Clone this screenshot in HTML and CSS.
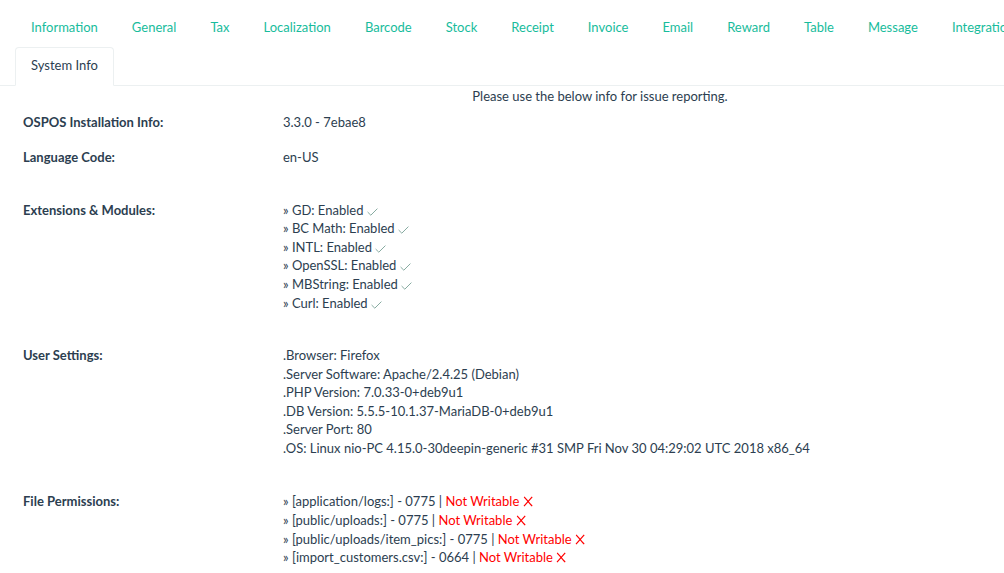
FILE: index.html
```html
<!DOCTYPE html>
<html lang="en">
<head>
<meta charset="utf-8">
<title>System Info</title>
<link rel="stylesheet" href="styles.css">
</head>
<body>
<div class="page">
  <ul class="tabs">
    <li><a>Information</a></li>
    <li><a>General</a></li>
    <li><a>Tax</a></li>
    <li><a>Localization</a></li>
    <li><a>Barcode</a></li>
    <li><a>Stock</a></li>
    <li><a>Receipt</a></li>
    <li><a>Invoice</a></li>
    <li><a>Email</a></li>
    <li><a>Reward</a></li>
    <li><a>Table</a></li>
    <li><a>Message</a></li>
    <li><a>Integrations</a></li>
    <li class="active"><a>System Info</a></li>
  </ul>
  <div class="content">
    <p class="intro">Please use the below info for issue reporting.</p>
    <div class="rows">
      <div class="row first">
        <div class="label">OSPOS Installation Info:</div>
        <div class="value">3.3.0 - 7ebae8</div>
      </div>
      <div class="row">
        <div class="label">Language Code:</div>
        <div class="value">en-US</div>
      </div>
      <div class="row">
        <div class="label">Extensions &amp; Modules:</div>
        <div class="value">
          <div>» GD: Enabled <svg class="ok" viewBox="0 0 11 8" width="11" height="8"><polyline points="0.6,4 3.8,7.2 10.4,0.6"/></svg></div>
          <div>» BC Math: Enabled <svg class="ok" viewBox="0 0 11 8" width="11" height="8"><polyline points="0.6,4 3.8,7.2 10.4,0.6"/></svg></div>
          <div>» INTL: Enabled <svg class="ok" viewBox="0 0 11 8" width="11" height="8"><polyline points="0.6,4 3.8,7.2 10.4,0.6"/></svg></div>
          <div>» OpenSSL: Enabled <svg class="ok" viewBox="0 0 11 8" width="11" height="8"><polyline points="0.6,4 3.8,7.2 10.4,0.6"/></svg></div>
          <div>» MBString: Enabled <svg class="ok" viewBox="0 0 11 8" width="11" height="8"><polyline points="0.6,4 3.8,7.2 10.4,0.6"/></svg></div>
          <div>» Curl: Enabled <svg class="ok" viewBox="0 0 11 8" width="11" height="8"><polyline points="0.6,4 3.8,7.2 10.4,0.6"/></svg></div>
        </div>
      </div>
      <div class="row">
        <div class="label">User Settings:</div>
        <div class="value">
          <div>.Browser: Firefox</div>
          <div>.Server Software: Apache/2.4.25 (Debian)</div>
          <div>.PHP Version: 7.0.33-0+deb9u1</div>
          <div>.DB Version: 5.5.5-10.1.37-MariaDB-0+deb9u1</div>
          <div>.Server Port: 80</div>
          <div>.OS: Linux nio-PC 4.15.0-30deepin-generic #31 SMP Fri Nov 30 04:29:02 UTC 2018 x86_64</div>
        </div>
      </div>
      <div class="row last">
        <div class="label">File Permissions:</div>
        <div class="value">
          <div>» [application/logs:] - 0775 | <span class="bad">Not Writable <svg class="x" viewBox="0 0 10 11" width="10" height="11"><path d="M1.2 0.8 C3.5 3.5 6.5 7.5 9.2 10.2 M9.2 0.8 L1 10.2"/></svg></span></div>
          <div>» [public/uploads:] - 0775 | <span class="bad">Not Writable <svg class="x" viewBox="0 0 10 11" width="10" height="11"><path d="M1.2 0.8 C3.5 3.5 6.5 7.5 9.2 10.2 M9.2 0.8 L1 10.2"/></svg></span></div>
          <div>» [public/uploads/item_pics:] - 0775 | <span class="bad">Not Writable <svg class="x" viewBox="0 0 10 11" width="10" height="11"><path d="M1.2 0.8 C3.5 3.5 6.5 7.5 9.2 10.2 M9.2 0.8 L1 10.2"/></svg></span></div>
          <div>» [import_customers.csv:] - 0664 | <span class="bad">Not Writable <svg class="x" viewBox="0 0 10 11" width="10" height="11"><path d="M1.2 0.8 C3.5 3.5 6.5 7.5 9.2 10.2 M9.2 0.8 L1 10.2"/></svg></span></div>
        </div>
      </div>
    </div>
  </div>
</div>
</body>
</html>
```

FILE: styles.css
```css
html, body {
  margin: 0;
  padding: 0;
  overflow: hidden;
  background: #ffffff;
}
body {
  font-family: Lato, "Open Sans", sans-serif;
  font-size: 13px;
  line-height: 1.42857;
  color: #2c3e50;
}
.page {
  width: 1200px;
  padding-top: 9px;
}
.tabs {
  list-style: none;
  margin: 0;
  padding: 0 100px 0 15px;
  display: flex;
  flex-wrap: wrap;
  border-bottom: 1px solid #ecf0f1;
}
.tabs li {
  margin-right: 2px;
  margin-bottom: -1px;
}
.tabs a {
  display: block;
  padding: 8px 15px 11px;
  font-size: 13px;
  line-height: 18px;
  color: #18bc9c;
  border: 1px solid transparent;
  border-radius: 4px 4px 0 0;
}
.tabs .active a {
  color: #2c3e50;
  background: #ffffff;
  border-color: #ecf0f1;
  border-bottom-color: transparent;
}
.intro {
  margin: 1px 0 0;
  text-align: center;
}
.rows {
  padding: 7px 0 0 23px;
}
.row {
  display: grid;
  grid-template-columns: 260px 1fr;
  margin-top: 34px;
}
.row.first {
  margin-top: 0;
}
.row.first + .row {
  margin-top: 17px;
}
.row.last {
  margin-top: 35px;
}
.label {
  font-weight: bold;
}
.ok {
  fill: none;
  stroke: #86aaa0;
  stroke-width: 1;
  vertical-align: -1px;
}
.bad {
  color: #ff0000;
}
.x {
  fill: none;
  stroke: #ff0000;
  stroke-width: 1.2;
  vertical-align: -1px;
}
```
